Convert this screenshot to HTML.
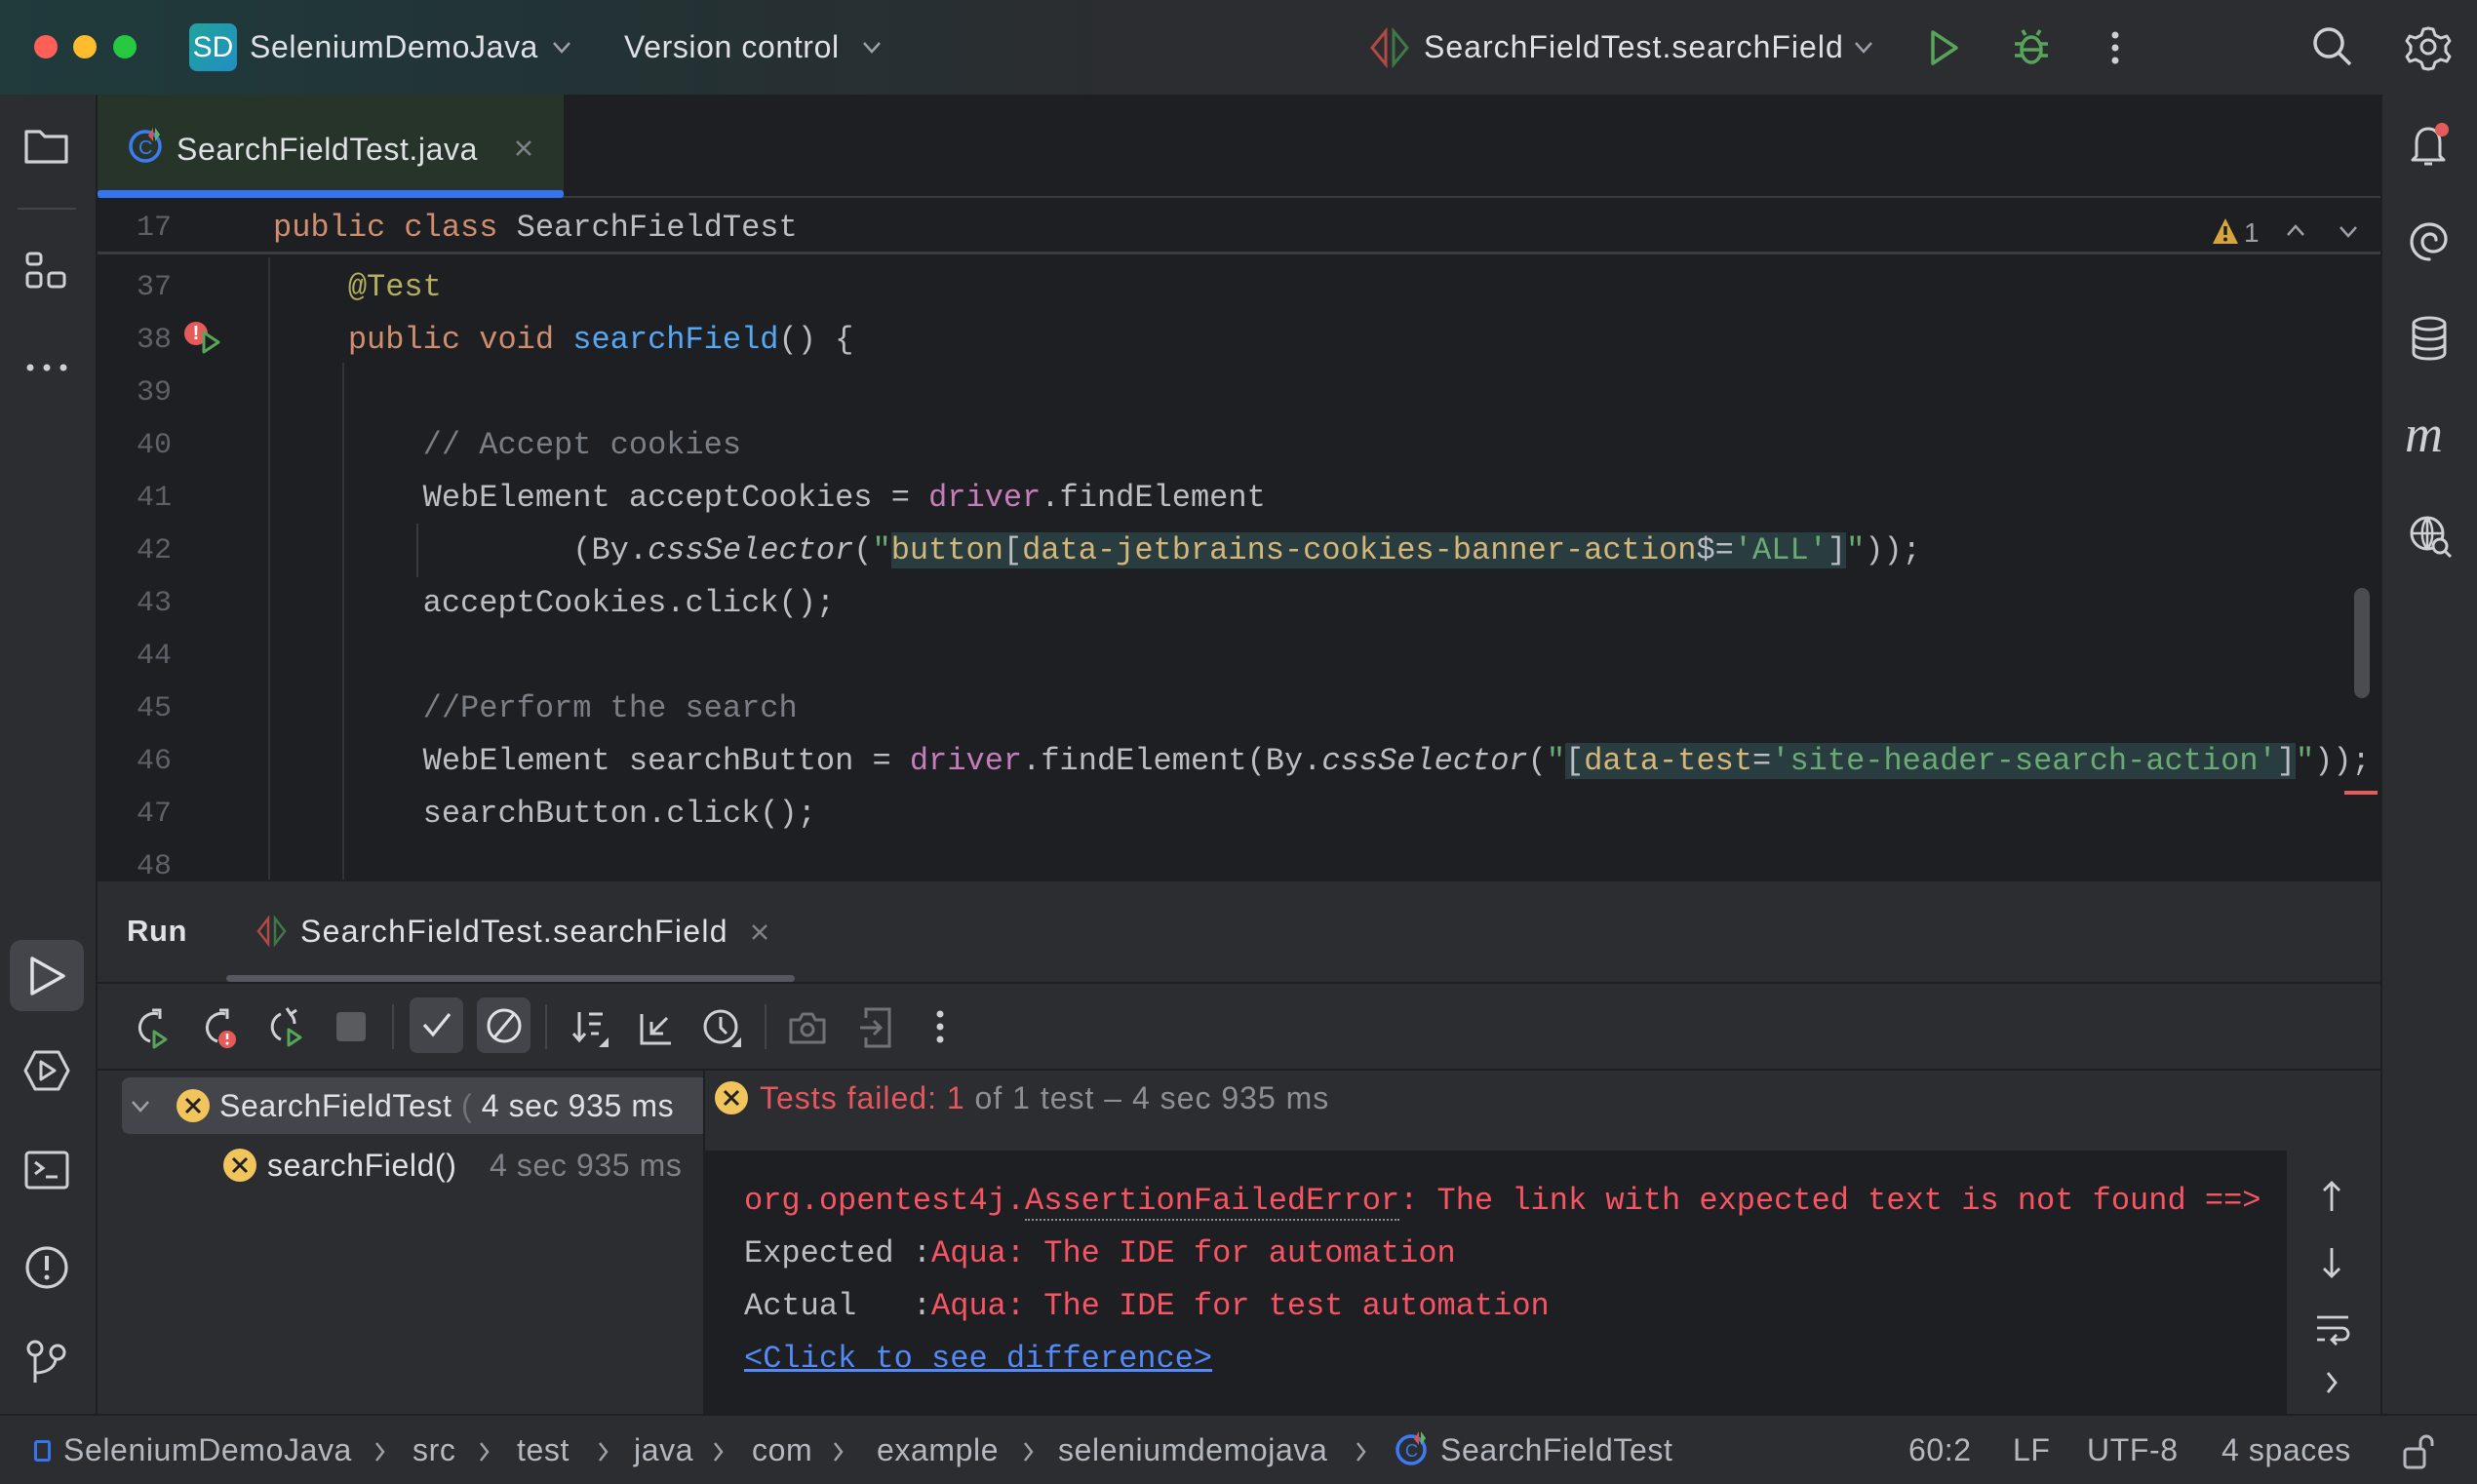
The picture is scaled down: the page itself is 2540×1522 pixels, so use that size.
<!DOCTYPE html>
<html><head><meta charset="utf-8"><style>
*{margin:0;padding:0;box-sizing:border-box}
body{width:2540px;height:1522px;background:#1e1f22;overflow:hidden;position:relative;font-family:"Liberation Sans",sans-serif;color:#dfe1e5}
.a{position:absolute}
.ui{font-size:32px;line-height:40px;white-space:nowrap;letter-spacing:0.6px}
.mono{font-family:"Liberation Mono",monospace;font-size:32px;white-space:pre}
svg{position:absolute;overflow:visible}
.k{color:#cf8e6d}.an{color:#b3ae60}.fn{color:#56a8f5}.cm{color:#7a7e85}.pu{color:#c77dbb}.st{color:#6aab73}.tn{color:#d5b778}.it{font-style:italic}
.hl{background:#293c40}
.ln{position:absolute;left:100px;width:76px;text-align:right;color:#5e6168;font-family:"Liberation Mono",monospace;font-size:30px}
</style></head><body>
<!-- title bar -->
<div class="a" style="left:0;top:0;width:2540px;height:97px;background:linear-gradient(90deg,#1f3b3c 0%,#233234 25%,#2b2d30 45%,#2b2d30 100%)"></div>
<div class="a" style="left:35px;top:36px;width:24px;height:24px;border-radius:50%;background:#ff5f57"></div>
<div class="a" style="left:75px;top:36px;width:24px;height:24px;border-radius:50%;background:#febc2e"></div>
<div class="a" style="left:116px;top:36px;width:24px;height:24px;border-radius:50%;background:#28c840"></div>
<div class="a" style="left:194px;top:24px;width:49px;height:49px;border-radius:8px;background:linear-gradient(135deg,#22a39a,#1f8fc4);color:#fff;font-size:30px;line-height:49px;text-align:center">SD</div>
<div class="a ui" style="left:256px;top:28px;color:#dfe1e5">SeleniumDemoJava</div>
<svg style="left:566px;top:42px" width="20" height="14"><path d="M2 2l8 9 8-9" stroke="#9da0a8" stroke-width="2.5" fill="none"/></svg>
<div class="a ui" style="left:640px;top:28px">Version control</div>
<svg style="left:884px;top:42px" width="20" height="14"><path d="M2 2l8 9 8-9" stroke="#9da0a8" stroke-width="2.5" fill="none"/></svg>
<svg style="left:1403px;top:30px" width="44" height="38"><path d="M18 2L4 19l14 17z" stroke="#b04a44" stroke-width="3" fill="none"/><path d="M26 2l14 17-14 17z" stroke="#3f7a46" stroke-width="3" fill="none"/></svg>
<div class="a ui" style="left:1460px;top:28px;letter-spacing:1px">SearchFieldTest.searchField</div>
<svg style="left:1901px;top:42px" width="20" height="14"><path d="M2 2l8 9 8-9" stroke="#9da0a8" stroke-width="2.5" fill="none"/></svg>
<svg style="left:1978px;top:30px" width="32" height="38"><path d="M4 3v32l24-16z" stroke="#57a55a" stroke-width="3.5" fill="none" stroke-linejoin="round"/></svg>
<svg style="left:2062px;top:27px" width="42" height="42"><ellipse cx="21" cy="24" rx="10" ry="13" stroke="#57a55a" stroke-width="3.5" fill="none"/><path d="M15 9l-3-5M27 9l3-5M4 18h7M31 18h7M4 30h7M31 30h7M11 24h20" stroke="#57a55a" stroke-width="3.5"/></svg>
<svg style="left:2163px;top:32px" width="12" height="34"><circle cx="6" cy="4" r="3.5" fill="#ced0d6"/><circle cx="6" cy="17" r="3.5" fill="#ced0d6"/><circle cx="6" cy="30" r="3.5" fill="#ced0d6"/></svg>
<svg style="left:2370px;top:26px" width="44" height="44"><circle cx="18" cy="18" r="14" stroke="#ced0d6" stroke-width="3.5" fill="none"/><path d="M28 28l12 12" stroke="#ced0d6" stroke-width="3.5"/></svg>
<svg style="left:2468px;top:26px" width="44" height="44"><path d="M22 3l5 1 2 6 6 3 6-2 3 5-4 5v6l4 5-3 5-6-2-6 3-2 6-5 1-5-1-2-6-6-3-6 2-3-5 4-5v-6l-4-5 3-5 6 2 6-3 2-6z" stroke="#ced0d6" stroke-width="3" fill="none" stroke-linejoin="round"/><circle cx="22" cy="22" r="7" stroke="#ced0d6" stroke-width="3" fill="none"/></svg>

<!-- left toolbar -->
<div class="a" style="left:0;top:97px;width:100px;height:1353px;background:#2b2d30;border-right:2px solid #1e1f22"></div>
<svg style="left:25px;top:131px" width="46" height="38"><path d="M2 4h14l5 5h22v26H2z" stroke="#ced0d6" stroke-width="3.2" fill="none" stroke-linejoin="round"/></svg>
<div class="a" style="left:18px;top:213px;width:60px;height:2px;background:#43454a"></div>
<svg style="left:26px;top:258px" width="44" height="40"><rect x="2" y="2" width="14" height="11" rx="3" stroke="#ced0d6" stroke-width="3" fill="none"/><rect x="2" y="22" width="14" height="14" rx="3" stroke="#ced0d6" stroke-width="3" fill="none"/><rect x="24" y="22" width="16" height="14" rx="3" stroke="#ced0d6" stroke-width="3" fill="none"/></svg>
<svg style="left:26px;top:372px" width="44" height="10"><circle cx="5" cy="5" r="3.5" fill="#ced0d6"/><circle cx="22" cy="5" r="3.5" fill="#ced0d6"/><circle cx="39" cy="5" r="3.5" fill="#ced0d6"/></svg>
<div class="a" style="left:10px;top:964px;width:76px;height:73px;border-radius:12px;background:#43454a"></div>
<svg style="left:30px;top:980px" width="38" height="42"><path d="M3 3v36l32-18z" stroke="#dfe1e5" stroke-width="3.5" fill="none" stroke-linejoin="round"/></svg>
<svg style="left:24px;top:1077px" width="48" height="42"><path d="M12 2h24l10 19-10 19H12L2 21z" stroke="#ced0d6" stroke-width="3" fill="none" stroke-linejoin="round"/><path d="M18 12v18l14-9z" stroke="#ced0d6" stroke-width="3" fill="none" stroke-linejoin="round"/></svg>
<svg style="left:25px;top:1180px" width="46" height="40"><rect x="2" y="2" width="42" height="36" rx="3" stroke="#ced0d6" stroke-width="3" fill="none"/><path d="M11 12l8 6-8 6M22 27h12" stroke="#ced0d6" stroke-width="3" fill="none"/></svg>
<svg style="left:25px;top:1277px" width="46" height="46"><circle cx="23" cy="23" r="20" stroke="#ced0d6" stroke-width="3.2" fill="none"/><path d="M23 11v15" stroke="#ced0d6" stroke-width="4"/><circle cx="23" cy="33" r="2.5" fill="#ced0d6"/></svg>
<svg style="left:26px;top:1374px" width="44" height="46"><circle cx="10" cy="9" r="7" stroke="#ced0d6" stroke-width="3" fill="none"/><circle cx="33" cy="13" r="7" stroke="#ced0d6" stroke-width="3" fill="none"/><path d="M10 16v28M10 34c10 0 20-4 21-14" stroke="#ced0d6" stroke-width="3" fill="none"/></svg>

<!-- right toolbar -->
<div class="a" style="left:2441px;top:97px;width:99px;height:1353px;background:#2b2d30;border-left:2px solid #1e1f22"></div>
<svg style="left:2468px;top:124px" width="44" height="50"><path d="M10 36V22c0-9 5-14 12-14s12 5 12 14v14l4 4H6z" stroke="#ced0d6" stroke-width="3" fill="none" stroke-linejoin="round"/><path d="M18 44h8" stroke="#ced0d6" stroke-width="3"/><circle cx="36" cy="9" r="7" fill="#e55b59"/></svg>
<svg style="left:2470px;top:226px" width="42" height="44"><path d="M21 40c-10 0-18-8-18-18S11 4 21 4s17 7 17 15-6 13-13 13-11-5-11-10 4-8 8-8 6 3 6 6" stroke="#ced0d6" stroke-width="3.2" fill="none" stroke-linecap="round"/></svg>
<svg style="left:2472px;top:324px" width="38" height="46"><ellipse cx="19" cy="8" rx="16" ry="6" stroke="#ced0d6" stroke-width="3" fill="none"/><path d="M3 8v30c0 4 7 6 16 6s16-2 16-6V8M3 18c0 4 7 6 16 6s16-2 16-6M3 28c0 4 7 6 16 6s16-2 16-6" stroke="#ced0d6" stroke-width="3" fill="none"/></svg>
<div class="a" style="left:2466px;top:418px;font-size:54px;font-style:italic;color:#ced0d6;font-family:'Liberation Serif',serif;line-height:54px">m</div>
<svg style="left:2470px;top:528px" width="46" height="46"><circle cx="19" cy="19" r="16" stroke="#ced0d6" stroke-width="3" fill="none"/><path d="M3 19h32M19 3c-7 8-7 24 0 32M19 3c7 8 7 24 0 32M19 3v32" stroke="#ced0d6" stroke-width="2.5" fill="none"/><circle cx="32" cy="32" r="7" stroke="#ced0d6" stroke-width="3" fill="#2b2d30"/><path d="M37 37l6 6" stroke="#ced0d6" stroke-width="3"/></svg>

<!-- tab bar -->
<div class="a" style="left:100px;top:97px;width:2341px;height:106px;background:#1e1f22;border-bottom:2px solid #393b40"></div>
<div class="a" style="left:100px;top:97px;width:478px;height:106px;background:#27342a"></div>
<div class="a" style="left:100px;top:195px;width:478px;height:8px;background:#3574f0;border-radius:3px"></div>
<svg style="left:130px;top:129px" width="40" height="40"><circle cx="19" cy="21" r="15" stroke="#3d7bf5" stroke-width="3.5" fill="none"/><text x="12" y="29" font-size="20" fill="#3d7bf5" font-family="Liberation Sans">C</text><path d="M27 2l-5 8 5 6z" fill="#d9534f"/><path d="M29 2l5 7-5 7z" fill="#5fb760"/></svg>
<div class="a ui" style="left:181px;top:133px;font-size:32px">SearchFieldTest.java</div>
<svg style="left:528px;top:143px" width="18" height="18"><path d="M2 2l14 14M16 2L2 16" stroke="#7f8288" stroke-width="2.5"/></svg>

<!-- sticky line -->
<div class="a" style="left:100px;top:205px;width:2341px;height:56px;border-bottom:3px solid #393b40;background:#1e1f22"></div>
<div class="ln" style="top:214px;line-height:40px">17</div>
<div class="a mono" style="left:280px;top:214px;line-height:40px;color:#bcbec4"><span class="k">public class</span> SearchFieldTest</div>
<svg style="left:2267px;top:222px" width="30" height="30"><path d="M15 2L2 28h26z" fill="#d6a53c"/><path d="M15 10v9" stroke="#1e1f22" stroke-width="3.5"/><circle cx="15" cy="23.5" r="2" fill="#1e1f22"/></svg>
<div class="a ui" style="left:2301px;top:219px;font-size:28px;color:#9da0a8">1</div>
<svg style="left:2344px;top:229px" width="20" height="14"><path d="M2 12l8-9 8 9" stroke="#9da0a8" stroke-width="2.5" fill="none"/></svg>
<svg style="left:2398px;top:231px" width="20" height="14"><path d="M2 2l8 9 8-9" stroke="#9da0a8" stroke-width="2.5" fill="none"/></svg>

<!-- editor gutter -->
<div class="a" style="left:275px;top:264px;width:2px;height:638px;background:#313438"></div>
<div class="a" style="left:351px;top:372px;width:2px;height:530px;background:#313438"></div>
<div class="a" style="left:427px;top:537px;width:2px;height:55px;background:#393b40"></div>
<div class="ln" style="top:268px;line-height:54px">37<br>38<br>39<br>40<br>41<br>42<br>43<br>44<br>45<br>46<br>47<br>48</div>
<div class="a" style="left:189px;top:330px;width:24px;height:24px;border-radius:50%;background:#e55b59;color:#fff;font-size:20px;font-weight:bold;text-align:center;line-height:24px">!</div>
<svg style="left:206px;top:338px" width="20" height="26"><path d="M3 3v20l15-10z" stroke="#57a55a" stroke-width="3" fill="#1e1f22" stroke-linejoin="round"/></svg>
<div class="a mono" style="left:280px;top:268px;line-height:54px;color:#bcbec4">    <span class="an">@Test</span>
    <span class="k">public void</span> <span class="fn">searchField</span>() {

        <span class="cm">// Accept cookies</span>
        WebElement acceptCookies = <span class="pu">driver</span>.findElement
                (By.<span class="it">cssSelector</span>(<span class="st">"</span><span class="hl"><span class="tn">button</span>[<span class="tn">data-jetbrains-cookies-banner-action</span>$=<span class="st">'ALL'</span>]</span><span class="st">"</span>));
        acceptCookies.click();

        <span class="cm">//Perform the search</span>
        WebElement searchButton = <span class="pu">driver</span>.findElement(By.<span class="it">cssSelector</span>(<span class="st">"</span><span class="hl">[<span class="tn">data-test</span>=<span class="st">'site-header-search-action'</span>]</span><span class="st">"</span>));
        searchButton.click();
</div>
<div class="a" style="left:2414px;top:603px;width:16px;height:113px;border-radius:8px;background:#4a4c50"></div>
<div class="a" style="left:2404px;top:811px;width:34px;height:4px;background:#e55b59"></div>

<!-- run panel -->
<div class="a" style="left:100px;top:902px;width:2341px;height:548px;background:#2b2d30;border-top:2px solid #1e1f22"></div>
<div class="a ui" style="left:130px;top:935px;font-weight:bold;font-size:31px">Run</div>
<svg style="left:262px;top:940px" width="34" height="30"><path d="M13 2L3 15l10 13z" stroke="#b04a44" stroke-width="2.5" fill="none"/><path d="M20 2l10 13-10 13z" stroke="#3f7a46" stroke-width="2.5" fill="none"/></svg>
<div class="a ui" style="left:308px;top:935px;font-size:32px;letter-spacing:1.3px">SearchFieldTest.searchField</div>
<svg style="left:770px;top:947px" width="18" height="18"><path d="M2 2l14 14M16 2L2 16" stroke="#7f8288" stroke-width="2.5"/></svg>
<div class="a" style="left:232px;top:1000px;width:583px;height:7px;border-radius:4px;background:#55585e"></div>
<div class="a" style="left:100px;top:1007px;width:2341px;height:2px;background:#1e1f22"></div>
<!-- toolbar -->
<svg style="left:138px;top:1034px" width="40" height="42"><path d="M24 6a14 14 0 1 0-8 28" stroke="#ced0d6" stroke-width="3" fill="none"/><path d="M18 2h8v9" stroke="#ced0d6" stroke-width="3" fill="none"/><path d="M20 24v16l12-8z" stroke="#57a55a" stroke-width="3" fill="none" stroke-linejoin="round"/></svg>
<svg style="left:207px;top:1034px" width="40" height="42"><path d="M24 6a14 14 0 1 0-8 28" stroke="#ced0d6" stroke-width="3" fill="none"/><path d="M18 2h8v9" stroke="#ced0d6" stroke-width="3" fill="none"/><circle cx="26" cy="32" r="9" fill="#e55b59"/><path d="M26 26v6" stroke="#fff" stroke-width="2.5"/><circle cx="26" cy="36" r="1.5" fill="#fff"/></svg>
<svg style="left:274px;top:1032px" width="40" height="44"><path d="M14 8a14 14 0 0 0 0 26M24 8a14 14 0 0 1 4 10" stroke="#ced0d6" stroke-width="3" fill="none"/><path d="M20 2l4 6 6-4" stroke="#ced0d6" stroke-width="3" fill="none"/><path d="M22 24v16l12-8z" stroke="#57a55a" stroke-width="3" fill="none" stroke-linejoin="round"/></svg>
<div class="a" style="left:345px;top:1038px;width:30px;height:30px;border-radius:4px;background:#5a5b5e"></div>
<div class="a" style="left:402px;top:1030px;width:2px;height:46px;background:#43454a"></div>
<div class="a" style="left:420px;top:1023px;width:55px;height:57px;border-radius:8px;background:#43454a"></div>
<svg style="left:432px;top:1036px" width="32" height="30"><path d="M3 15l9 10L29 4" stroke="#dfe1e5" stroke-width="3.2" fill="none"/></svg>
<div class="a" style="left:489px;top:1023px;width:55px;height:57px;border-radius:8px;background:#43454a"></div>
<svg style="left:498px;top:1033px" width="38" height="38"><circle cx="19" cy="19" r="16" stroke="#dfe1e5" stroke-width="3" fill="none"/><path d="M9 31L29 7" stroke="#dfe1e5" stroke-width="3"/></svg>
<div class="a" style="left:559px;top:1030px;width:2px;height:46px;background:#43454a"></div>
<svg style="left:586px;top:1034px" width="40" height="42"><path d="M8 4v28M2 26l6 7 6-7M18 6h14M18 16h12M20 26h8" stroke="#ced0d6" stroke-width="3" fill="none"/><path d="M38 30v10H28z" fill="#ced0d6"/></svg>
<svg style="left:654px;top:1034px" width="40" height="40"><path d="M4 6v30h30M14 26l16-16M14 14v12h12" stroke="#ced0d6" stroke-width="3" fill="none"/></svg>
<svg style="left:720px;top:1032px" width="42" height="44"><circle cx="19" cy="21" r="16" stroke="#ced0d6" stroke-width="3" fill="none"/><path d="M19 11v11l6 6" stroke="#ced0d6" stroke-width="3" fill="none"/><path d="M40 32v10H30z" fill="#ced0d6"/></svg>
<div class="a" style="left:784px;top:1030px;width:2px;height:46px;background:#43454a"></div>
<svg style="left:808px;top:1036px" width="40" height="36"><path d="M3 10h9l3-6h10l3 6h9v23H3z" stroke="#6f7277" stroke-width="3" fill="none" stroke-linejoin="round"/><circle cx="20" cy="20" r="6" stroke="#6f7277" stroke-width="3" fill="none"/></svg>
<svg style="left:880px;top:1032px" width="36" height="44"><path d="M8 12V3h24v38H8v-9M2 22h20M16 15l7 7-7 7" stroke="#6f7277" stroke-width="3" fill="none"/></svg>
<svg style="left:958px;top:1036px" width="12" height="34"><circle cx="6" cy="4" r="3.5" fill="#ced0d6"/><circle cx="6" cy="17" r="3.5" fill="#ced0d6"/><circle cx="6" cy="30" r="3.5" fill="#ced0d6"/></svg>
<div class="a" style="left:100px;top:1096px;width:2341px;height:2px;background:#1e1f22"></div>
<!-- tree -->
<div class="a" style="left:125px;top:1105px;width:597px;height:58px;border-radius:8px 0 0 8px;background:#43454a"></div>
<svg style="left:134px;top:1128px" width="20" height="14"><path d="M2 2l8 9 8-9" stroke="#9da0a8" stroke-width="2.5" fill="none"/></svg>
<svg style="left:180px;top:1116px" width="36" height="36"><circle cx="18" cy="18" r="17" fill="#f2c55c"/><path d="M11 11l14 14M25 11L11 25" stroke="#1e1f22" stroke-width="3"/></svg>
<div class="a ui" style="left:225px;top:1114px;font-size:32px">SearchFieldTest <span style="color:#6f7277">(</span> 4 sec 935 ms</div>
<svg style="left:228px;top:1177px" width="36" height="36"><circle cx="18" cy="18" r="17" fill="#f2c55c"/><path d="M11 11l14 14M25 11L11 25" stroke="#1e1f22" stroke-width="3"/></svg>
<div class="a ui" style="left:274px;top:1175px;font-size:32px">searchField()</div>
<div class="a ui" style="left:502px;top:1175px;font-size:32px;color:#7f8288">4 sec 935 ms</div>
<div class="a" style="left:721px;top:1098px;width:2px;height:352px;background:#1e1f22"></div>
<!-- console -->
<svg style="left:732px;top:1108px" width="36" height="36"><circle cx="18" cy="18" r="17" fill="#f2c55c"/><path d="M11 11l14 14M25 11L11 25" stroke="#1e1f22" stroke-width="3"/></svg>
<div class="a ui" style="left:779px;top:1106px;font-size:32px;color:#8c8f94;letter-spacing:1px"><span style="color:#e5575f">Tests failed: 1</span> of 1 test – 4 sec 935 ms</div>
<div class="a" style="left:723px;top:1180px;width:1622px;height:270px;background:#1e1f22"></div>
<div class="a mono" style="left:763px;top:1205px;line-height:54px;color:#bcbec4"><span style="color:#f75464">org.opentest4j.<span style="border-bottom:2px dotted #8c8f94">AssertionFailedError</span>: The link with expected text is not found ==&gt;</span>
Expected :<span style="color:#f75464">Aqua: The IDE for automation</span>
Actual   :<span style="color:#f75464">Aqua: The IDE for test automation</span>
<span style="color:#548af7;text-decoration:underline">&lt;Click to see difference&gt;</span></div>
<div class="a" style="left:2441px;top:1098px;width:2px;height:352px;background:#1e1f22"></div>
<svg style="left:2381px;top:1210px" width="20" height="34"><path d="M10 32V3M2 11l8-8 8 8" stroke="#ced0d6" stroke-width="2.8" fill="none"/></svg>
<svg style="left:2381px;top:1278px" width="20" height="34"><path d="M10 2v29M2 23l8 8 8-8" stroke="#ced0d6" stroke-width="2.8" fill="none"/></svg>
<svg style="left:2374px;top:1348px" width="36" height="32"><path d="M2 3h32M2 14h26a6 6 0 0 1 0 12H18M22 21l-5 5 5 5M2 26h8" stroke="#ced0d6" stroke-width="2.8" fill="none"/></svg>
<svg style="left:2384px;top:1406px" width="14" height="24"><path d="M3 2l8 10-8 10" stroke="#ced0d6" stroke-width="2.8" fill="none"/></svg>

<!-- status bar -->
<div class="a" style="left:0;top:1450px;width:2540px;height:72px;background:#2b2d30;border-top:2px solid #1e1f22"></div>
<div class="a" style="left:35px;top:1477px;width:17px;height:22px;border:3px solid #3574f0;border-radius:3px"></div>
<div class="a ui" style="left:65px;top:1467px;color:#b4b8bf;font-size:32px">SeleniumDemoJava</div>
<div class="a ui" style="left:423px;top:1467px;color:#b4b8bf;font-size:32px">src</div>
<div class="a ui" style="left:530px;top:1467px;color:#b4b8bf;font-size:32px">test</div>
<div class="a ui" style="left:650px;top:1467px;color:#b4b8bf;font-size:32px">java</div>
<div class="a ui" style="left:771px;top:1467px;color:#b4b8bf;font-size:32px">com</div>
<div class="a ui" style="left:899px;top:1467px;color:#b4b8bf;font-size:32px">example</div>
<div class="a ui" style="left:1085px;top:1467px;color:#b4b8bf;font-size:32px">seleniumdemojava</div>
<svg style="left:384px;top:1478px" width="12" height="22"><path d="M2 2l7 9-7 9" stroke="#9da0a8" stroke-width="2.5" fill="none"/></svg>
<svg style="left:491px;top:1478px" width="12" height="22"><path d="M2 2l7 9-7 9" stroke="#9da0a8" stroke-width="2.5" fill="none"/></svg>
<svg style="left:613px;top:1478px" width="12" height="22"><path d="M2 2l7 9-7 9" stroke="#9da0a8" stroke-width="2.5" fill="none"/></svg>
<svg style="left:731px;top:1478px" width="12" height="22"><path d="M2 2l7 9-7 9" stroke="#9da0a8" stroke-width="2.5" fill="none"/></svg>
<svg style="left:854px;top:1478px" width="12" height="22"><path d="M2 2l7 9-7 9" stroke="#9da0a8" stroke-width="2.5" fill="none"/></svg>
<svg style="left:1049px;top:1478px" width="12" height="22"><path d="M2 2l7 9-7 9" stroke="#9da0a8" stroke-width="2.5" fill="none"/></svg>
<svg style="left:1390px;top:1478px" width="12" height="22"><path d="M2 2l7 9-7 9" stroke="#9da0a8" stroke-width="2.5" fill="none"/></svg>
<svg style="left:1430px;top:1466px" width="40" height="40"><circle cx="17" cy="21" r="14" stroke="#3d7bf5" stroke-width="3.5" fill="none"/><text x="11" y="28" font-size="18" fill="#3d7bf5" font-family="Liberation Sans">C</text><path d="M25 2l-5 8 5 6z" fill="#d9534f"/><path d="M27 2l5 7-5 7z" fill="#5fb760"/></svg>
<div class="a ui" style="left:1477px;top:1467px;color:#b4b8bf;font-size:32px">SearchFieldTest</div>
<div class="a ui" style="left:1957px;top:1467px;color:#b4b8bf;font-size:32px">60:2</div>
<div class="a ui" style="left:2064px;top:1467px;color:#b4b8bf;font-size:32px">LF</div>
<div class="a ui" style="left:2140px;top:1467px;color:#b4b8bf;font-size:32px">UTF-8</div>
<div class="a ui" style="left:2278px;top:1467px;color:#b4b8bf;font-size:32px">4 spaces</div>
<svg style="left:2464px;top:1470px" width="34" height="38"><rect x="2" y="16" width="20" height="19" rx="3" stroke="#b4b8bf" stroke-width="3" fill="none"/><path d="M18 16V9a6 6 0 0 1 12 0v4" stroke="#b4b8bf" stroke-width="3" fill="none"/></svg>
</body></html>
